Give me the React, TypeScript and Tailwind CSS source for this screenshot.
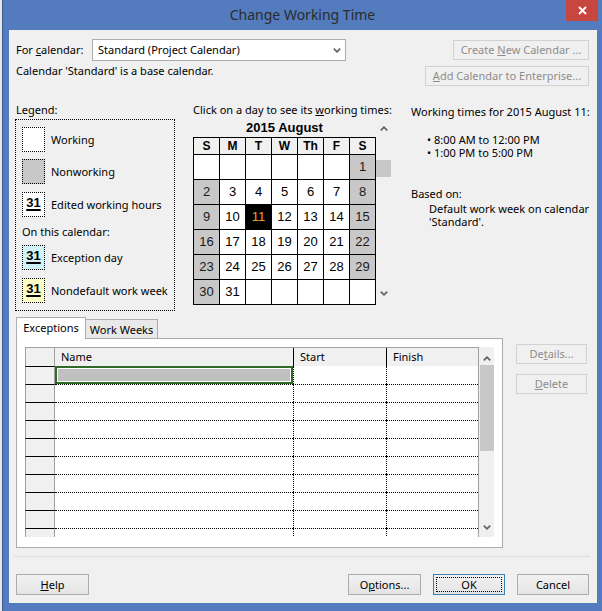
import React from "react";

const weeks: (number | null)[][] = [
  [null, null, null, null, null, null, 1],
  [2, 3, 4, 5, 6, 7, 8],
  [9, 10, 11, 12, 13, 14, 15],
  [16, 17, 18, 19, 20, 21, 22],
  [23, 24, 25, 26, 27, 28, 29],
  [30, 31, null, null, null, null, null],
];

function Chevron({ up }: { up?: boolean }) {
  return (
    <svg width="8" height="5" viewBox="0 0 8 5">
      <path
        d={up ? "M0.8 4.4 L4 1.2 L7.2 4.4" : "M0.8 0.6 L4 3.8 L7.2 0.6"}
        fill="none"
        stroke="#606060"
        strokeWidth="1.7"
      />
    </svg>
  );
}

function Btn({
  children,
  kind = "normal",
  className = "",
}: {
  children: React.ReactNode;
  kind?: "normal" | "disabled" | "default";
  className?: string;
}) {
  if (kind === "disabled") {
    return (
      <div className={`flex items-center justify-center border border-[#d2d2d2] bg-[#f0f0f0] text-[#8d8d8d] ${className}`}>
        <span className="whitespace-nowrap">{children}</span>
      </div>
    );
  }
  if (kind === "default") {
    return (
      <div className={`flex items-center justify-center border border-[#3c7fb1] bg-gradient-to-b from-[#f2f2f2] to-[#e4e4e4] p-[2px] ${className}`}>
        <div className="flex h-full w-full items-center justify-center border border-dotted border-black">
          <span>{children}</span>
        </div>
      </div>
    );
  }
  return (
    <div className={`flex items-center justify-center border border-[#acacac] bg-gradient-to-b from-[#f2f2f2] to-[#e4e4e4] ${className}`}>
      <span className="whitespace-nowrap">{children}</span>
    </div>
  );
}

function Swatch({ bg, num }: { bg: string; num?: boolean }) {
  return (
    <div className={`flex h-[25px] w-[23px] shrink-0 items-start justify-center border border-dotted border-black pt-[2px] ${bg}`}>
      {num && (
        <span className="font-['Liberation_Sans',sans-serif] text-[13px] font-bold leading-[15px] underline decoration-2 underline-offset-[2px]">
          31
        </span>
      )}
    </div>
  );
}

function Calendar() {
  return (
    <div className="flex">
      <div className="flex w-[183px] flex-col">
        <div className="flex h-[18px] items-center justify-center font-['Liberation_Sans',sans-serif] text-[13px] font-bold">
          2015 August
        </div>
        <div className="grid grid-cols-[repeat(7,25px)] grid-rows-[16px_repeat(6,24px)] gap-px border border-black bg-black font-['Liberation_Sans',sans-serif]">
          {["S", "M", "T", "W", "Th", "F", "S"].map((d, i) => (
            <div key={i} className="flex items-center justify-center bg-[#f0f0f0] text-[12px] font-bold">
              {d}
            </div>
          ))}
          {weeks.flat().map((d, i) => {
            const col = i % 7;
            let cls = "bg-white text-black";
            if (d !== null && (col === 0 || col === 6)) cls = "bg-[#c8c8c8] text-[#1a1a1a]";
            if (d === 11) cls = "bg-black text-[#f0a030]";
            return (
              <div key={i} className={`flex items-center justify-center text-[13px] ${cls}`}>
                {d}
              </div>
            );
          })}
        </div>
      </div>
      <div className="flex w-[15px] flex-col items-center pt-[7px]">
        <Chevron up />
        <div className="mt-[29px] h-[17px] w-[15px] bg-[#c8c8c8]" />
        <div className="mt-[114px]">
          <Chevron />
        </div>
      </div>
    </div>
  );
}

function ExceptionGrid() {
  const rows = Array.from({ length: 10 });
  return (
    <div className="flex h-[190px] w-[469px] overflow-hidden">
      <div className="flex w-[453px] flex-col">
        <div className="flex h-[19px] shrink-0 border-t border-[#a0a0a0] bg-[#f0f0f0]">
          <div className="w-[30px] border-x border-[#a0a0a0]" />
          <div className="flex w-[238px] items-end pl-[6px] pb-px">Name</div>
          <div className="flex w-[93px] items-end border-l border-black pl-[6px] pb-px">Start</div>
          <div className="flex w-[92px] items-end border-l border-black pl-[6px] pb-px">Finish</div>
        </div>
        {rows.map((_, i) => (
          <div key={i} className="flex h-[18px] shrink-0">
            <div className="w-[30px] border-x border-t border-x-[#a0a0a0] border-t-black bg-[#f0f0f0]" />
            {i === 0 ? (
              <div className="w-[238px] border-2 border-[#2f6b26] bg-white p-px">
                <div className="h-full w-full bg-[#c0c0c0]" />
              </div>
            ) : (
              <div className="w-[238px] border-t border-dotted border-black" />
            )}
            <div className={`w-[93px] border-l border-dotted border-black ${i === 0 ? "" : "border-t"}`} />
            <div className={`w-[92px] border-l border-dotted border-black ${i === 0 ? "" : "border-t"}`} />
          </div>
        ))}
      </div>
      <div className="flex w-[16px] flex-col items-center border-l border-[#a0a0a0] bg-[#f0f0f0] pt-[9px]">
        <Chevron up />
        <div className="mt-[4px] h-[86px] w-[14px] bg-[#c8c8c8]" />
        <div className="mt-[74px]">
          <Chevron />
        </div>
      </div>
    </div>
  );
}

export default function App() {
  return (
    <div className="flex h-[611px] w-[602px] overflow-hidden bg-[#f4f4f4] font-['Noto_Sans',sans-serif] text-[11px] leading-[16px] text-black">
      <div className="w-[2px] shrink-0 bg-[#e6e6e6]" />
      <div className="flex flex-1 flex-col border-l border-[#3d5f96] bg-[#537bbd]">
        {/* title bar */}
        <div className="grid h-[30px] shrink-0 grid-cols-[1fr_auto_1fr]">
          <div />
          <div className="flex items-center pb-[1px] text-[14px] text-[#2b2b2b]">Change Working Time</div>
          <div className="flex justify-end pr-[4px]">
            <div className="flex h-[21px] w-[32px] items-center justify-center bg-[#c7463f]">
              <svg width="9" height="9" viewBox="0 0 9 9">
                <path d="M1 1 L8 8 M8 1 L1 8" stroke="white" strokeWidth="1.8" />
              </svg>
            </div>
          </div>
        </div>

        <div className="mb-[8px] ml-[6px] mr-[5px] flex flex-1 flex-col bg-[#f0f0f0]">
          {/* top */}
          <div className="flex h-[72px] shrink-0 justify-between">
            <div className="pl-[7px] pt-[9px]">
              <div className="flex items-center">
                <div className="w-[76px]">
                  For <span className="underline">c</span>alendar:
                </div>
                <div className="flex h-[22px] w-[254px] items-center justify-between border border-[#acacac] bg-white pl-[5px] pr-[4px]">
                  <span>Standard (Project Calendar)</span>
                  <Chevron />
                </div>
              </div>
              <div className="mt-[2px]">Calendar 'Standard' is a base calendar.</div>
            </div>
            <div className="flex flex-col items-end gap-[6px] pr-[8px] pt-[10px]">
              <Btn kind="disabled" className="h-[20px] w-[136px]">
                Create <span className="underline">N</span>ew Calendar ...
              </Btn>
              <Btn kind="disabled" className="h-[20px] w-[164px]">
                <span className="underline">A</span>dd Calendar to Enterprise...
              </Btn>
            </div>
          </div>

          {/* legend / calendar / details */}
          <div className="flex h-[209px] shrink-0">
            <div className="ml-[6px] w-[160px]">
              <div className="pl-px">Legend:</div>
              <div className="mt-px flex h-[192px] flex-col border border-dotted border-black pl-[6px] pt-[7px]">
                <div className="flex items-center">
                  <Swatch bg="bg-white" />
                  <span className="ml-[6px]">Working</span>
                </div>
                <div className="mt-[7px] flex items-center">
                  <Swatch bg="bg-[#c8c8c8]" />
                  <span className="ml-[6px]">Nonworking</span>
                </div>
                <div className="mt-[8px] flex items-center">
                  <Swatch bg="bg-white" num />
                  <span className="ml-[6px]">Edited working hours</span>
                </div>
                <div className="mt-[7px]">On this calendar:</div>
                <div className="mt-[5px] flex items-center">
                  <Swatch bg="bg-[#cff3f7]" num />
                  <span className="ml-[6px]">Exception day</span>
                </div>
                <div className="mt-[8px] flex items-center">
                  <Swatch bg="bg-[#fdfdc6]" num />
                  <span className="ml-[6px] whitespace-nowrap">Nondefault work week</span>
                </div>
              </div>
            </div>

            <div className="ml-[18px] w-[198px]">
              <div className="whitespace-nowrap">
                Click on a day to see its <span className="underline">w</span>orking times:
              </div>
              <div className="mt-px">
                <Calendar />
              </div>
            </div>

            <div className="ml-[20px] pt-[2px]">
              <div className="whitespace-nowrap">Working times for 2015 August 11:</div>
              <div className="mt-[13px] pl-[16px] leading-[13px]">
                <div>• 8:00 AM to 12:00 PM</div>
                <div>• 1:00 PM to 5:00 PM</div>
              </div>
              <div className="mt-[27px]">Based on:</div>
              <div className="pl-[18px] leading-[13px]">
                <div>Default work week on calendar</div>
                <div>'Standard'.</div>
              </div>
            </div>
          </div>

          {/* tabs */}
          <div className="mt-[6px] flex h-[231px] shrink-0">
            <div className="ml-[7px] flex w-[487px] flex-col">
              <div className="flex h-[22px] items-end">
                <div className="relative z-10 flex h-[22px] w-[70px] items-center justify-center border-x border-t border-[#acacac] bg-white pb-[2px]">
                  Exceptions
                </div>
                <div className="flex h-[20px] w-[72px] items-center justify-center border-r border-t border-[#acacac] bg-[#e9e9e9]">
                  Work Weeks
                </div>
              </div>
              <div className="-mt-px h-[210px] border border-[#acacac] bg-white pl-[8px] pt-[8px]">
                <ExceptionGrid />
              </div>
            </div>
            <div className="ml-[13px] flex flex-col gap-[10px] pt-[27px]">
              <Btn kind="disabled" className="h-[20px] w-[71px]">
                De<span className="underline">t</span>ails...
              </Btn>
              <Btn kind="disabled" className="h-[20px] w-[71px]">
                <span className="underline">D</span>elete
              </Btn>
            </div>
          </div>

          <div className="ml-[5px] mr-[7px] mt-[8px] border-t border-[#dcdcdc]" />

          {/* bottom buttons */}
          <div className="mt-[17px] flex">
            <Btn className="ml-[7px] h-[21px] w-[73px]">
              <span className="underline">H</span>elp
            </Btn>
            <div className="flex-1" />
            <Btn className="h-[21px] w-[73px]">
              O<span className="underline">p</span>tions...
            </Btn>
            <Btn kind="default" className="ml-[12px] h-[21px] w-[72px]">
              OK
            </Btn>
            <Btn className="ml-[12px] mr-[8px] h-[21px] w-[72px]">Cancel</Btn>
          </div>
        </div>
      </div>
    </div>
  );
}
